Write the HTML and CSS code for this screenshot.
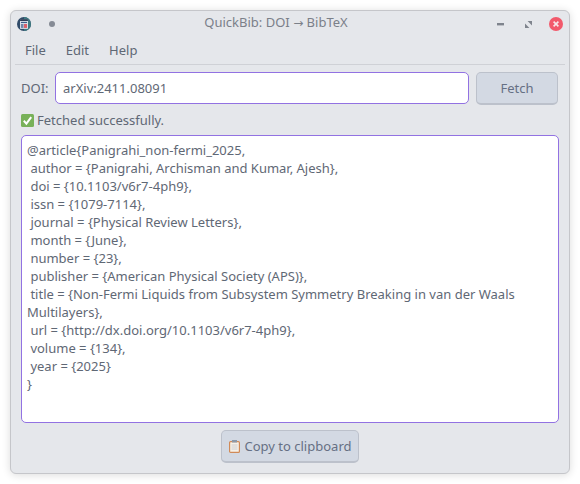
FILE: index.html
```html
<!DOCTYPE html>
<html lang="en">
<head>
<meta charset="utf-8">
<title>QuickBib</title>
<link rel="stylesheet" href="styles.css">
</head>
<body>
<div class="window">
  <header class="titlebar">
    <div class="tb-left">
      <svg class="app-icon" width="14" height="14" viewBox="0 0 16 16">
        <circle cx="8" cy="8" r="8" fill="#2f4a68"/>
        <path d="M8 0A8 8 0 0 1 16 8 8 8 0 0 1 8 16z" fill="#3d7a80"/>
        <rect x="3.5" y="2.5" width="9" height="11" fill="#e8edf2"/>
        <rect x="3.5" y="2.5" width="9" height="2" fill="#26364f"/>
        <rect x="4.5" y="5.5" width="7" height="1.5" fill="#3b5f8a"/>
        <rect x="4.5" y="8" width="3" height="4.5" fill="#6f87a8"/>
        <rect x="8" y="8" width="3.5" height="4.5" fill="#d9606a"/>
      </svg>
      <span class="pin"></span>
    </div>
    <div class="title">QuickBib: DOI <span class="arrow">→</span> BibTeX</div>
    <div class="tb-right">
      <span class="wb"><svg width="7" height="3" viewBox="0 0 7 3"><rect width="7" height="2.4" fill="#7f848d"/></svg></span>
      <span class="wb"><svg width="7" height="7" viewBox="0 0 7 7"><path d="M2.6 0H7v4.4zM0 2.6L4.4 7H0z" fill="#7f848d"/></svg></span>
      <span class="wb"><svg width="14" height="14" viewBox="0 0 14 14"><circle cx="7" cy="7" r="7" fill="#f2596b"/><path d="M4.6 4.6l4.8 4.8M9.4 4.6l-4.8 4.8" stroke="#f7e6e8" stroke-width="1.6"/></svg></span>
    </div>
  </header>
  <nav class="menubar">
    <span>File</span><span>Edit</span><span>Help</span>
  </nav>
  <main class="content">
    <div class="doi-row">
      <label class="doi-label">DOI:</label>
      <div class="field doi-input">arXiv:2411.08091</div>
      <button class="btn fetch">Fetch</button>
    </div>
    <div class="status"><span class="check"><svg width="13" height="13" viewBox="0 0 13 13"><rect width="13" height="13" rx="1.5" fill="#78b159"/><path d="M2.8 6.8l2.6 2.8 4.8-6.4" fill="none" stroke="#fff" stroke-width="2"/></svg></span>Fetched successfully.</div>
    <div class="field output">@article{Panigrahi_non-fermi_2025,
 author = {Panigrahi, Archisman and Kumar, Ajesh},
 doi = {10.1103/v6r7-4ph9},
 issn = {1079-7114},
 journal = {Physical Review Letters},
 month = {June},
 number = {23},
 publisher = {American Physical Society (APS)},
 title = {Non-Fermi Liquids from Subsystem Symmetry Breaking in van der Waals Multilayers},
 url = {http://dx.doi.org/10.1103/v6r7-4ph9},
 volume = {134},
 year = {2025}
}</div>
    <div class="copy-row">
      <button class="btn copy"><svg width="11" height="13" viewBox="0 0 11 13"><rect x=".6" y="1.6" width="9.8" height="10.8" rx="1" fill="#f6f1e8" stroke="#d08a58" stroke-width="1.2"/><rect x="3" y="0" width="5" height="2.5" fill="#8d99a8"/><path d="M2.5 5h6M2.5 7h6M2.5 9h6" stroke="#c4c7cd" stroke-width=".8"/></svg>Copy to clipboard</button>
    </div>
  </main>
</div>
</body>
</html>
```
FILE: styles.css
```css
* { box-sizing: border-box; }
html, body { margin: 0; padding: 0; background: #fff; }
body {
  width: 580px;
  height: 484px;
  padding: 10px;
  font-family: "Noto Sans", sans-serif;
  font-size: 13px;
  color: #5f6875;
  overflow: hidden;
}
.window {
  width: 560px;
  height: 464px;
  background: #e5e7eb;
  border: 1px solid #c5c6ca;
  border-radius: 6px;
  box-shadow: 0 1px 8px rgba(0, 0, 0, .14);
  display: flex;
  flex-direction: column;
}
.titlebar {
  height: 25px;
  flex: none;
  padding: 1px 6px 0 6px;
  display: flex;
  align-items: center;
  position: relative;
}
.tb-left { display: flex; align-items: center; gap: 18px; }
.app-icon { display: block; }
.pin { width: 6px; height: 6px; border-radius: 50%; background: #858b95; }
.title {
  position: absolute;
  left: 0;
  right: 28px;
  top: 0;
  text-align: center;
  line-height: 22px;
  color: #7b8089;
}
.arrow { font-family: "DejaVu Sans", sans-serif; font-size: 12px; }
.tb-right {
  margin-left: auto;
  display: flex;
  align-items: center;
  gap: 14px;
}
.wb { width: 14px; display: flex; justify-content: center; }
.wb svg { display: block; }
.menubar {
  height: 29px;
  flex: none;
  margin: 0 4px;
  padding: 0 10px;
  display: flex;
  align-items: center;
  gap: 20px;
  border-bottom: 1px solid #cfd1d6;
}
.content {
  flex: 1;
  min-height: 0;
  padding: 7px 10px 8px;
  display: flex;
  flex-direction: column;
}
.doi-row { display: flex; align-items: flex-start; height: 32px; flex: none; }
.doi-label { width: 34px; flex: none; line-height: 32px; }
.field {
  background: #fff;
  border: 1px solid #9272e2;
  border-radius: 5px;
  color: #5f6875;
}
.doi-input {
  width: 414px;
  height: 32px;
  line-height: 30px;
  padding: 0 7px;
  flex: none;
}
.btn {
  font: inherit;
  color: #667084;
  background: #d3d9e3;
  border: 1px solid #bcc1cb;
  border-bottom-width: 2px;
  border-radius: 5px;
  padding: 0;
}
.fetch { width: 82px; height: 33px; margin-left: 7px; flex: none; }
.status {
  height: 31px;
  flex: none;
  display: flex;
  align-items: center;
  gap: 3px;
  padding-top: 1px;
}
.check { display: flex; }
.output {
  height: 288px;
  flex: none;
  padding: 5px 5px;
  line-height: 18px;
  white-space: pre-wrap;
}
.copy-row { display: flex; justify-content: center; margin-top: 7px; }
.copy {
  width: 138px;
  height: 33px;
  display: flex;
  align-items: center;
  justify-content: center;
  gap: 5px;
}
```
